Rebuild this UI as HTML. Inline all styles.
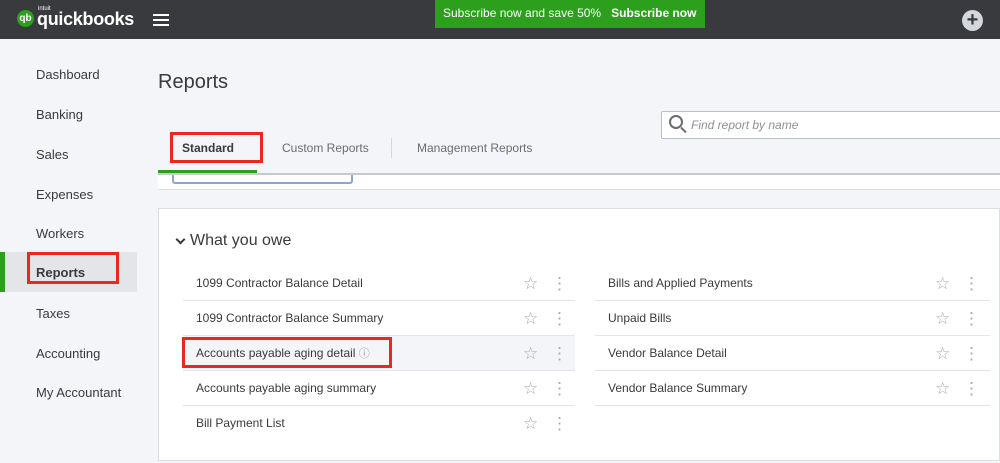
<!DOCTYPE html><html><head><style>
*{margin:0;padding:0;box-sizing:border-box}
body{width:1000px;height:463px;overflow:hidden;background:#f4f5f8;font-family:"Liberation Sans",sans-serif;color:#393a3d;position:relative}
.a{position:absolute}
.top{left:0;top:0;width:1000px;height:39px;background:#393a3d}
.side div{position:absolute;left:36px;font-size:13px;color:#393a3d}
.row{position:absolute;height:35px;border-bottom:1px solid #e3e5e8;font-size:12px;line-height:35px;padding-left:13px;color:#393a3d}
.ic{position:absolute;top:0;color:#aaa;font-size:17px}
.rb{border:3px solid #e8291c;position:absolute}
</style></head><body>
<div class="a top"></div>
<div class="a" style="left:17px;top:10px;width:17px;height:17px;border-radius:50%;background:#2ca01c;color:#fff;font-size:10px;font-weight:bold;text-align:center;line-height:17px">qb</div>
<div class="a" style="left:38px;top:6px;color:#fff;font-size:6px">intuit</div>
<div class="a" style="left:37px;top:9px;color:#fff;font-size:18px;font-weight:bold;letter-spacing:-0.3px">quickbooks</div>
<div class="a" style="left:153px;top:14px;width:16px;height:2px;background:#fff;box-shadow:0 5px 0 #fff,0 10px 0 #fff"></div>
<div class="a" style="left:435px;top:0;width:270px;height:28px;background:#2ca01c;color:#fff;font-size:12px;line-height:27px;padding-left:8px">Subscribe now and save 50% &nbsp;&nbsp;<b>Subscribe now</b></div>
<div class="a" style="left:962px;top:10px;width:21px;height:21px;border-radius:50%;background:#d4d7dc;color:#393a3d;font-size:20px;line-height:20px;text-align:center;font-weight:bold">+</div>
<div class="a" style="left:0;top:252px;width:137px;height:40px;background:#e3e5e8"></div>
<div class="a" style="left:0;top:252px;width:5px;height:40px;background:#2ca01c"></div>
<div class="side">
<div style="top:67px">Dashboard</div><div style="top:107px">Banking</div><div style="top:147px">Sales</div><div style="top:187px">Expenses</div><div style="top:226px">Workers</div><div style="top:265px;font-weight:bold">Reports</div><div style="top:306px">Taxes</div><div style="top:346px">Accounting</div><div style="top:385px">My Accountant</div>
</div>
<div class="rb" style="left:27px;top:252px;width:92px;height:32px"></div>
<div class="a" style="left:158px;top:71px;font-size:20px">Reports</div>
<div class="a" style="left:661px;top:111px;width:345px;height:28px;background:#fff;border:1px solid #babec5;border-radius:2px"></div>
<div class="a" style="left:669px;top:115px;width:14px;height:14px;border:2px solid #6b6c72;border-radius:50%"></div>
<div class="a" style="left:680px;top:129px;width:7px;height:2px;background:#6b6c72;transform:rotate(45deg)"></div>
<div class="a" style="left:691px;top:118px;font-size:12px;color:#8d9096;font-style:italic">Find report by name</div>
<div class="a" style="left:182px;top:141px;font-size:12px;font-weight:bold">Standard</div>
<div class="rb" style="left:170px;top:132px;width:93px;height:31px"></div>
<div class="a" style="left:282px;top:141px;font-size:12px;color:#6b6c72">Custom Reports</div>
<div class="a" style="left:391px;top:138px;width:1px;height:20px;background:#d4d7dc"></div>
<div class="a" style="left:417px;top:141px;font-size:12px;color:#6b6c72">Management Reports</div>
<div class="a" style="left:158px;top:173px;width:842px;height:2px;background:#c7c9cd"></div>
<div class="a" style="left:158px;top:170px;width:99px;height:3px;background:#2ca01c"></div>
<div class="a" style="left:158px;top:175px;width:842px;height:15px;background:#fff;border-bottom:1px solid #dcdee2"></div>
<div class="a" style="left:172px;top:175px;width:181px;height:9px;border:2px solid #8fa4c8;border-top:none;border-radius:0 0 3px 3px"></div>
<div class="a" style="left:158px;top:208px;width:842px;height:253px;background:#fff;border:1px solid #dcdee2"></div>
<div class="a" style="left:177px;top:236px;width:7px;height:7px;border-right:2px solid #393a3d;border-bottom:2px solid #393a3d;transform:rotate(45deg)"></div>
<div class="a" style="left:190px;top:232px;font-size:16px">What you owe</div>
<div class="a" style="left:183px;top:336px;width:392px;height:35px;background:#f4f5f8"></div>
<div class="a" style="left:183px;top:266px">
<div class="row" style="top:0;width:392px">1099 Contractor Balance Detail<span class="ic" style="left:340px">☆</span><span class="ic" style="left:368px">⋮</span></div>
<div class="row" style="top:35px;width:392px">1099 Contractor Balance Summary<span class="ic" style="left:340px">☆</span><span class="ic" style="left:368px">⋮</span></div>
<div class="row" style="top:70px;width:392px">Accounts payable aging detail <span style="color:#999;font-size:11px">ⓘ</span><span class="ic" style="left:340px">☆</span><span class="ic" style="left:368px">⋮</span></div>
<div class="row" style="top:105px;width:392px">Accounts payable aging summary<span class="ic" style="left:340px">☆</span><span class="ic" style="left:368px">⋮</span></div>
<div class="row" style="top:140px;width:392px;border:none">Bill Payment List<span class="ic" style="left:340px">☆</span><span class="ic" style="left:368px">⋮</span></div>
</div>
<div class="a" style="left:595px;top:266px">
<div class="row" style="top:0;width:395px">Bills and Applied Payments<span class="ic" style="left:340px">☆</span><span class="ic" style="left:368px">⋮</span></div>
<div class="row" style="top:35px;width:395px">Unpaid Bills<span class="ic" style="left:340px">☆</span><span class="ic" style="left:368px">⋮</span></div>
<div class="row" style="top:70px;width:395px">Vendor Balance Detail<span class="ic" style="left:340px">☆</span><span class="ic" style="left:368px">⋮</span></div>
<div class="row" style="top:105px;width:395px">Vendor Balance Summary<span class="ic" style="left:340px">☆</span><span class="ic" style="left:368px">⋮</span></div>
</div>
<div class="rb" style="left:182px;top:337px;width:210px;height:31px"></div>
</body></html>
